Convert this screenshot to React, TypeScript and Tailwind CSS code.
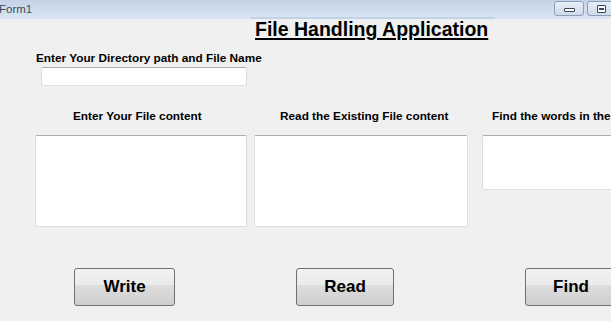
import React from 'react';

const label = "text-[11.8px] font-bold leading-[14px] text-black whitespace-nowrap";
const box = "bg-white border border-[#dcdde3] border-t-[#abadb3] rounded-[2px]";
const btn =
  "h-[38px] shrink-0 rounded-[3px] border border-[#707070] bg-[linear-gradient(to_bottom,#f2f2f2_0%,#ebebeb_44%,#dddddd_46%,#cfcfcf_100%)] text-[17px] font-bold text-black flex items-center justify-center";

const App: React.FC = () => {
  return (
    <div
      className="w-[611px] h-[321px] overflow-hidden bg-[#f0f0f0]"
      style={{ fontFamily: '"Liberation Sans", Arial, sans-serif' }}
    >
      {/* Title bar */}
      <div className="relative h-[19px] bg-[linear-gradient(to_bottom,#c3d3e6,#dae6f3)] flex items-start">
        <span className="mt-[2px] -ml-[1px] text-[11.5px] leading-[14px] text-[#3d4b5e]">Form1</span>
        <div className="ml-auto flex gap-[3px] mt-[1px]">
          <div className="w-[30px] h-[15px] rounded-[3px] border border-[#8d9fb9] bg-[linear-gradient(to_bottom,#e6eef8,#cfdbea)] flex items-end justify-center pb-[3px]">
            <div className="w-[11px] h-[4px] rounded-[1px] border border-[#3a4658] bg-white" />
          </div>
          <div className="w-[30px] h-[15px] -mr-[6px] rounded-[3px] border border-[#8d9fb9] bg-[linear-gradient(to_bottom,#e6eef8,#cfdbea)] flex items-start pl-[9px] pt-[3px]">
            <div className="w-[9px] h-[8px] rounded-[1px] border border-[#3a4658] bg-white flex items-center justify-center">
              <div className="w-[5px] h-[2px] bg-[#3a4658]" />
            </div>
          </div>
        </div>
        <div className="absolute left-[250px] bottom-0 w-[245px] h-[2px] bg-[#c2d3e8]" />
      </div>

      {/* Heading */}
      <div className="pl-[255px] h-[18px]">
        <span className="text-[19.5px] font-bold leading-[18px] underline underline-offset-[2px] decoration-[1.5px] text-black whitespace-nowrap">
          File Handling Application
        </span>
      </div>

      {/* Directory path */}
      <div className={`${label} mt-[14px] ml-[36px]`}>Enter Your Directory path and File Name</div>
      <div className={`${box} mt-[2px] ml-[41px] w-[206px] h-[19px]`} />

      {/* Content columns */}
      <div className="mt-[23px] ml-[35px] flex items-start">
        <div className="w-[212px] shrink-0">
          <div className={`${label} pl-[38px]`}>Enter Your File content</div>
          <div className={`${box} mt-[12px] h-[92px]`} />
        </div>
        <div className="w-[214px] shrink-0 ml-[7px]">
          <div className={`${label} pl-[26px]`}>Read the Existing File content</div>
          <div className={`${box} mt-[12px] h-[92px]`} />
        </div>
        <div className="w-[160px] shrink-0 ml-[14px]">
          <div className={`${label} pl-[10px]`}>Find the words in the file</div>
          <div className={`${box} mt-[12px] h-[55px]`} />
        </div>
      </div>

      {/* Buttons */}
      <div className="mt-[41px] ml-[74px] flex">
        <button className={`${btn} w-[101px]`}>Write</button>
        <button className={`${btn} w-[98px] ml-[121px]`}>Read</button>
        <button className={`${btn} w-[92px] ml-[131px]`}>Find</button>
      </div>
    </div>
  );
};

export default App;
